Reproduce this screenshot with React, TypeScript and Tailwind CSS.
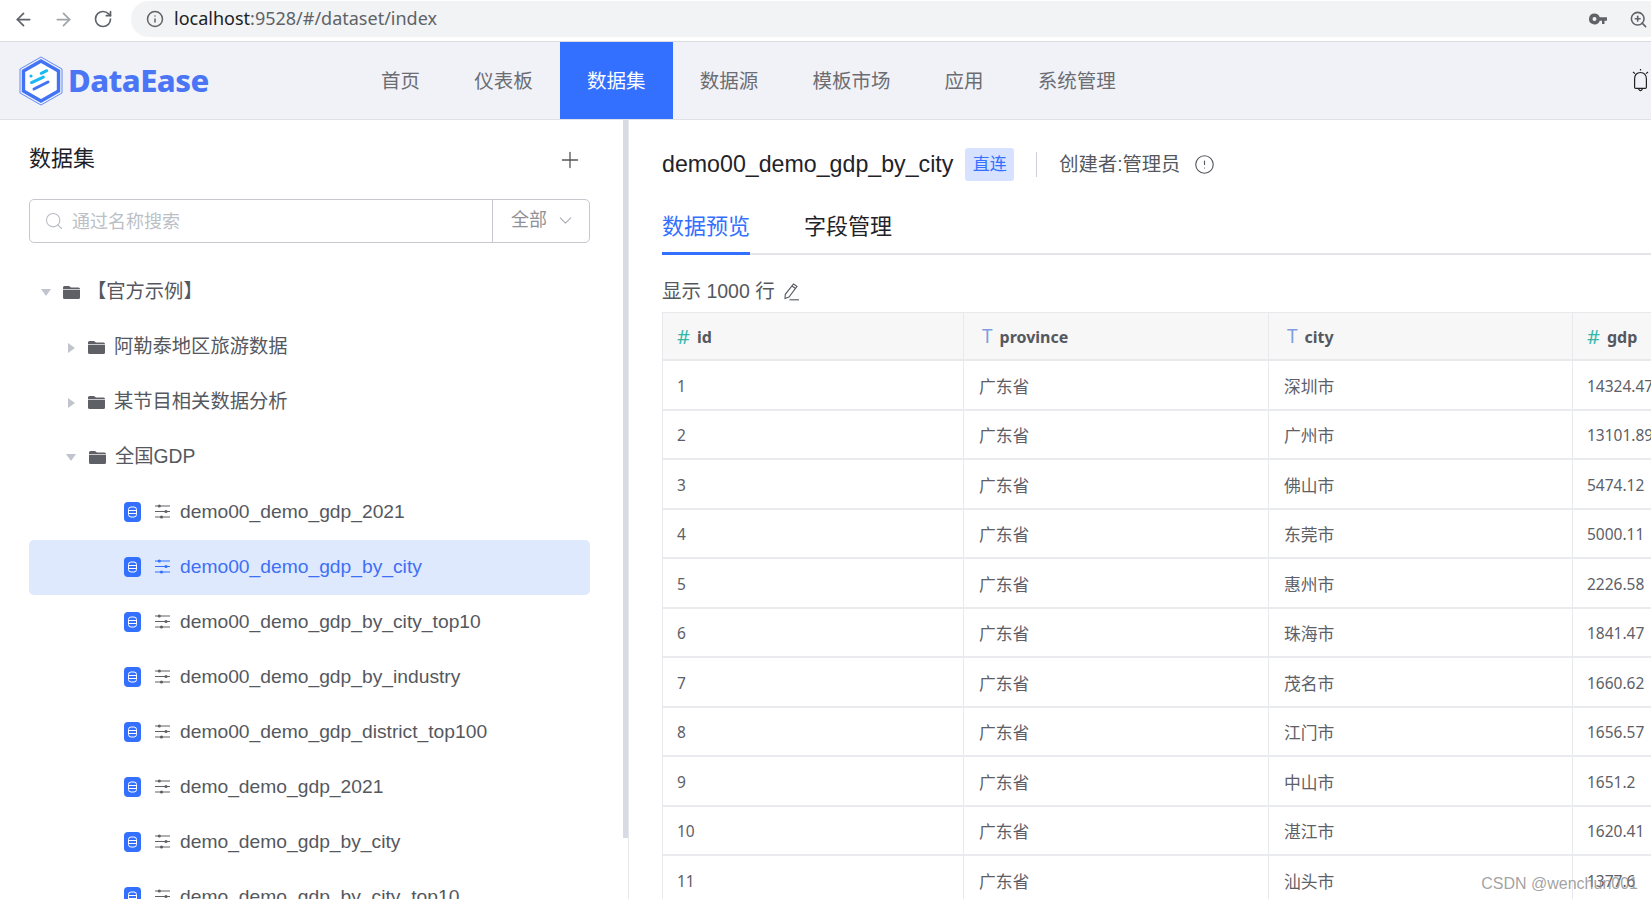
import { ArrowLeft, ArrowRight, RotateCw, Info, CircleAlert, ZoomIn, Plus, Search, ChevronDown } from 'lucide-react';

const navItems = ['首页', '仪表板', '数据集', '数据源', '模板市场', '应用', '系统管理'];

const datasets = [
  'demo00_demo_gdp_2021',
  'demo00_demo_gdp_by_city',
  'demo00_demo_gdp_by_city_top10',
  'demo00_demo_gdp_by_industry',
  'demo00_demo_gdp_district_top100',
  'demo_demo_gdp_2021',
  'demo_demo_gdp_by_city',
  'demo_demo_gdp_by_city_top10',
];

const rows = [
  ['1', '广东省', '深圳市', '14324.47'],
  ['2', '广东省', '广州市', '13101.89'],
  ['3', '广东省', '佛山市', '5474.12'],
  ['4', '广东省', '东莞市', '5000.11'],
  ['5', '广东省', '惠州市', '2226.58'],
  ['6', '广东省', '珠海市', '1841.47'],
  ['7', '广东省', '茂名市', '1660.62'],
  ['8', '广东省', '江门市', '1656.57'],
  ['9', '广东省', '中山市', '1651.2'],
  ['10', '广东省', '湛江市', '1620.41'],
  ['11', '广东省', '汕头市', '1377.6'],
];

const columns = [
  { type: '#', name: 'id' },
  { type: 'T', name: 'province' },
  { type: 'T', name: 'city' },
  { type: '#', name: 'gdp' },
];

const Logo = () => (
  <svg width="44" height="50" viewBox="0 0 44 50" className="shrink-0">
    <path d="M22 1 L43 13 V37 L22 49 L1 37 V13 Z" fill="none" stroke="#3f6ff5" strokeWidth="0.8" />
    <path d="M22 5 L39.5 15 V35 L22 45 L4.5 35 V15 Z" fill="#fff" stroke="#4273f5" strokeWidth="3.4" />
    <path d="M22 16 L28 16" stroke="#1ab8f5" strokeWidth="3" strokeLinecap="round" transform="rotate(-25 25 16)" />
    <path d="M12 24 L25 24" stroke="#1ab8f5" strokeWidth="3" strokeLinecap="round" transform="rotate(-25 18 24)" />
    <circle cx="12" cy="20" r="1.6" fill="#1ab8f5" />
    <path d="M15 33 L29 26" stroke="#4273f5" strokeWidth="3" strokeLinecap="round" />
  </svg>
);

const Bell = () => (
  <svg width="17" height="24" viewBox="0 0 17 24" fill="none" stroke="#222" strokeWidth="1.2">
    <path d="M8.5 3.5 C4.5 3.5 2.6 6.5 2.6 10 V18.2 Q2.6 19.4 3.8 19.4 H13.2 Q14.4 19.4 14.4 18.2 V10 C14.4 6.5 12.5 3.5 8.5 3.5 Z" />
    <path d="M6.5 19.8 Q8.5 23.6 10.5 19.8" />
    <path d="M8.5 0 V1.6 M1 3 L3 4.6 M16 3 L14 4.6" />
  </svg>
);

const KeyIcon = () => (
  <svg width="18" height="12" viewBox="0 0 18 12" fill="#5f6368">
    <path d="M5.5 0.5 A5.5 5.5 0 1 0 10.7 7.8 H13 V11 H15.5 V7.8 H18 V4.2 H10.7 A5.5 5.5 0 0 0 5.5 0.5 Z M5.5 4 A2 2 0 1 1 5.5 8 A2 2 0 0 1 5.5 4 Z" fillRule="evenodd" />
  </svg>
);

const FolderIcon = () => (
  <svg width="17" height="13" viewBox="0 0 17 13" fill="#5f6065" className="shrink-0">
    <path d="M1.5 0 H6 L8 1.6 H15.5 A1.5 1.5 0 0 1 17 3.1 V11.5 A1.5 1.5 0 0 1 15.5 13 H1.5 A1.5 1.5 0 0 1 0 11.5 V1.5 A1.5 1.5 0 0 1 1.5 0 Z" />
    <rect x="0" y="3" width="17" height="0.8" fill="#e8e8ea" />
  </svg>
);

const DbIcon = () => (
  <span className="w-[17px] h-5 -mt-[2px] rounded-[4px] bg-[#3370ff] flex items-center justify-center shrink-0">
    <svg width="11" height="12" viewBox="0 0 11 12" fill="none" stroke="#fff" strokeWidth="1">
      <rect x="1.5" y="1" width="8" height="10" rx="2.5" />
      <path d="M1.5 4.5 H9.5 M1.5 7.5 H9.5" />
    </svg>
  </span>
);

const SliderIcon = ({ active }: { active: boolean }) => (
  <svg width="15" height="15" viewBox="0 0 15 15" className="shrink-0 -mt-[2px]" stroke={active ? '#3370ff' : '#5f6065'} fill={active ? '#3370ff' : '#5f6065'} strokeWidth="1">
    <path d="M0 2 H15 M0 7.5 H15 M0 13 H15" />
    <circle cx="4.3" cy="2" r="1.6" stroke="none" />
    <circle cx="11" cy="7.5" r="1.6" stroke="none" />
    <circle cx="6.5" cy="13" r="1.6" stroke="none" />
  </svg>
);

const PencilMark = () => (
  <svg width="16" height="18" viewBox="0 0 16 18" fill="none" stroke="#55585e" strokeWidth="1.1">
    <path d="M10.5 1 L14 3.4 L6 14 L2 15.5 L2.3 11.3 Z" />
    <path d="M9 3 L12.6 5.5" />
    <path d="M6.5 16.8 H16" />
  </svg>
);

const Caret = ({ open }: { open: boolean }) => (
  <span
    className={
      open
        ? 'w-0 h-0 border-x-[5.5px] border-x-transparent border-t-[7px] border-t-[#c0c4cc] shrink-0'
        : 'w-0 h-0 border-y-[5.5px] border-y-transparent border-l-[7px] border-l-[#c0c4cc] shrink-0'
    }
  />
);

const App = () => {
  return (
    <div className="relative h-[899px] w-full overflow-hidden bg-white flex flex-col font-['Liberation_Sans','Noto_Sans_CJK_SC',sans-serif]">
      {/* browser bar */}
      <div className="h-[42px] shrink-0 flex items-center border-b border-[#dadce0] bg-white pb-[3px]">
        <div className="flex items-center gap-[19px] pl-[13px] w-[131px] text-[#5f6368]">
          <ArrowLeft size={21} />
          <ArrowRight size={21} className="text-[#a0a3a8]" />
          <RotateCw size={20} />
        </div>
        <div className="flex-1 h-[36px] rounded-l-[18px] bg-[#f1f3f4] flex items-center pl-[15px] pr-[3px] text-[#202124]">
          <Info size={18} className="text-[#5f6368] mr-[10px]" />
          <span className="font-['Noto_Sans'] text-[18px] -mt-[2px]">
            localhost<span className="text-[#5f6368]">:9528/#/dataset/index</span>
          </span>
          <div className="ml-auto flex items-center gap-[22px] text-[#5f6368]">
            <KeyIcon />
            <ZoomIn size={19} />
          </div>
        </div>
      </div>

      {/* app header */}
      <header className="h-[78px] shrink-0 flex items-stretch bg-[#f0f2f8] border-b border-[#dfe1e6]">
        <div className="w-[381px] flex items-center pl-[19px] gap-[5px]">
          <Logo />
          <span className="font-['Noto_Sans'] font-extrabold text-[31px] tracking-[-0.55px] text-[#4a76f5]">DataEase</span>
        </div>
        <nav className="flex items-stretch -ml-[27px]">
          {navItems.map((item) => (
            <a
              key={item}
              className={
                item === '数据集'
                  ? 'flex items-center pt-[2px] px-[27.1px] text-[19.5px] bg-[#3370ff] text-white'
                  : 'flex items-center pt-[2px] px-[27.1px] text-[19.5px] text-[#6b6d73]'
              }
            >
              {item}
            </a>
          ))}
        </nav>
        <div className="ml-auto flex items-center pr-[2px]">
          <Bell />
        </div>
      </header>

      <div className="flex-1 flex min-h-0">
        {/* left tree */}
        <aside className="w-[623px] shrink-0 pl-[29px] pr-[33px] overflow-hidden">
          <div className="flex items-center justify-between h-[76px] pr-[7px]">
            <h2 className="text-[22px] text-[#1f2329]">数据集</h2>
            <Plus size={26} strokeWidth={1.2} className="text-[#555] mt-[3px]" />
          </div>
          <div className="flex h-[44px] mt-[3px] rounded-[5px] border border-[#c6c8ce]">
            <div className="w-[463px] flex items-center pl-[14px] gap-[8px] border-r border-[#c6c8ce]">
              <Search size={20} strokeWidth={1.3} className="text-[#b8bbc2]" />
              <span className="text-[18px] text-[#bcbfc6] mt-[2px]">通过名称搜索</span>
            </div>
            <div className="flex-1 flex items-center pl-[18px] gap-[8px] text-[#8f9197]">
              <span className="text-[18px] -mt-[1px]">全部</span>
              <ChevronDown size={21} strokeWidth={1.2} className="text-[#a9abb1] -mt-[2px]" />
            </div>
          </div>

          <div className="mt-[22px] flex flex-col">
            <div className="h-[55px] flex items-center pl-[12px]">
              <Caret open />
              <span className="w-[12px]" />
              <FolderIcon />
              <span className="text-[19.3px] text-[#55585e] ml-[7px] -mt-[1px]">【官方示例】</span>
            </div>
            <div className="h-[55px] flex items-center pl-[39px]">
              <Caret open={false} />
              <span className="w-[13px]" />
              <FolderIcon />
              <span className="text-[19.3px] text-[#55585e] ml-[9px]">阿勒泰地区旅游数据</span>
            </div>
            <div className="h-[55px] flex items-center pl-[39px]">
              <Caret open={false} />
              <span className="w-[13px]" />
              <FolderIcon />
              <span className="text-[19.3px] text-[#55585e] ml-[9px]">某节目相关数据分析</span>
            </div>
            <div className="h-[55px] flex items-center pl-[37px]">
              <Caret open />
              <span className="w-[13px]" />
              <FolderIcon />
              <span className="text-[19.3px] text-[#55585e] ml-[9px] -mt-[1px]">全国GDP</span>
            </div>
            {datasets.map((name) => {
              const active = name === 'demo00_demo_gdp_by_city';
              return (
                <div
                  key={name}
                  className={
                    active
                      ? 'h-[55px] shrink-0 flex items-center pl-[95px] rounded-[5px] bg-[#dfe9fd] text-[#3e6ff5]'
                      : 'h-[55px] shrink-0 flex items-center pl-[95px] text-[#55585e]'
                  }
                >
                  <DbIcon />
                  <span className="w-[14px]" />
                  <SliderIcon active={active} />
                  <span className="ml-[10px] text-[19.25px]">{name}</span>
                </div>
              );
            })}
          </div>
        </aside>

        <div className="w-[5px] shrink-0 h-[718px] bg-[#d8dbe3]" />

        {/* dataset detail */}
        <main className="flex-1 min-w-0 border-l border-[#e8e9ed] pl-[33px] overflow-hidden">
          <div className="flex items-center h-[33px] mt-[28px]">
            <span className="text-[23.2px] text-[#1f2329]">demo00_demo_gdp_by_city</span>
            <span className="ml-[12px] w-[49px] h-[33px] rounded-[3px] bg-[#d6e2ff] text-[#3370ff] text-[17px] flex items-center justify-center">直连</span>
            <span className="ml-[22px] w-px h-[25px] bg-[#d0d2d8]" />
            <span className="ml-[22px] text-[19.3px] text-[#55585e] mt-[1px]">创建者:管理员</span>
            <CircleAlert size={21} strokeWidth={1.3} className="ml-[14px] text-[#55585e]" />
          </div>
          <div className="flex gap-[54px] mt-[26px] h-[48px] border-b-[2px] border-[#e4e5e9]">
            <span className="h-[48px] text-[22px] text-[#3370ff] border-b-[3px] border-[#3370ff] pt-[3px]">数据预览</span>
            <span className="text-[22px] text-[#1f2329] pt-[3px]">字段管理</span>
          </div>
          <div className="flex items-center gap-[8px] h-[24px] mt-[25px] text-[19.5px] text-[#55585e]">
            显示 1000 行
            <PencilMark />
          </div>
          <div className="mt-[8px] w-[1000px] border-l border-t border-[#e8e9ed] font-['Noto_Sans','Noto_Sans_CJK_SC',sans-serif]">
            <div className="grid grid-cols-[301px_305px_304px_90px] h-[48px] bg-[#f7f7f8] border-b-[2px] border-[#e8e9ed]">
              {columns.map((col) => (
                <div key={col.name} className={col.type === '#' ? 'flex items-center gap-[7px] pt-[1px] pl-[14px] border-r border-[#e8e9ed] text-[16px] font-bold text-[#55585e]' : 'flex items-center gap-[7px] pt-[1px] pl-[18px] border-r border-[#e8e9ed] text-[16px] font-bold text-[#55585e]'}>
                  <span className={col.type === '#' ? 'font-normal text-[#36b8a9] text-[20px]' : 'font-normal text-[#7f9fe0] text-[19px]'}>{col.type}</span>
                  {col.name}
                </div>
              ))}
            </div>
            {rows.map((row) => (
              <div key={row[0]} className="grid grid-cols-[301px_305px_304px_90px] h-[49.5px] border-b-[2px] border-[#eaebee]">
                {row.map((cell, i) => (
                  <div key={i} className={i === 1 || i === 2 ? 'flex items-center pt-[3px] pl-[15px] border-r border-[#e8e9ed] text-[16.8px] text-[#5d6068] whitespace-nowrap' : 'flex items-center pt-[3px] pl-[14px] border-r border-[#e8e9ed] text-[15.5px] text-[#5d6068] whitespace-nowrap'}>
                    {cell}
                  </div>
                ))}
              </div>
            ))}
          </div>
        </main>
      </div>

      <span className="absolute right-[13px] bottom-[3px] text-[16px] text-[#8a8a8a]/80">CSDN @wenchun001</span>
    </div>
  );
};

export default App;
